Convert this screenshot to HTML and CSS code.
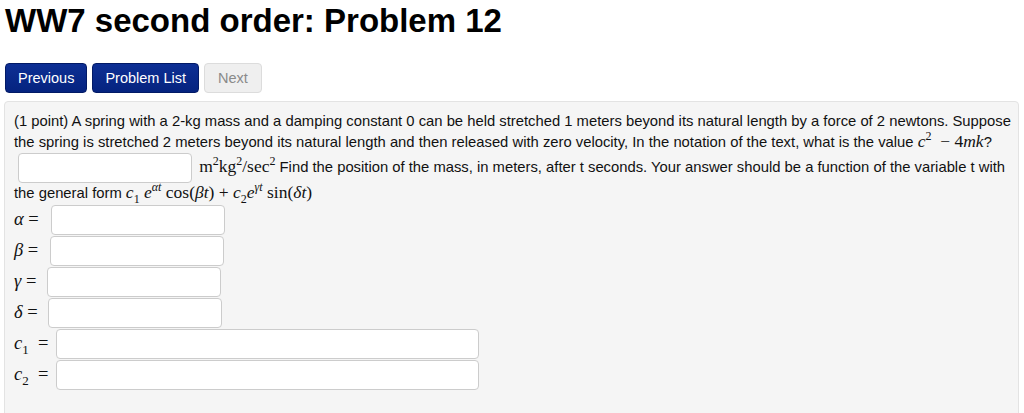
FILE: index.html
```html
<!DOCTYPE html>
<html>
<head>
<meta charset="utf-8">
<link rel="stylesheet" href="styles.css">
</head>
<body>
<h1 class="title">WW7 second order: Problem 12</h1>
<div class="nav">
  <span class="btn btn-primary">Previous</span>
  <span class="btn btn-primary">Problem List</span>
  <span class="btn btn-disabled">Next</span>
</div>
<div class="panel">
  <div class="text">(1 point) A spring with a 2-kg mass and a damping constant 0 can be held stretched 1 meters beyond its natural length by a force of 2 newtons. Suppose<br>the spring is stretched 2 meters beyond its natural length and then released with zero velocity, In the notation of the text, what is the value <span class="math"><i>c</i><sup>2</sup> &nbsp;&minus; 4<i>mk</i></span>?<br><span class="field field-first"></span> <span class="math unit">m<sup>2</sup>kg<sup>2</sup>/sec<sup>2</sup></span> Find the position of the mass, in meters, after t seconds. Your answer should be a function of the variable t with<br>the general form <span class="math"><i>c</i><sub>1</sub> <i>e</i><sup><i>αt</i></sup> cos(<i>βt</i>) + <i>c</i><sub>2</sub><i>e</i><sup><i>γt</i></sup> sin(<i>δt</i>)</span></div>
  <div class="row"><span class="math lbl lbl-a"><i>α</i> =</span><span class="field"></span></div>
  <div class="row"><span class="math lbl lbl-b"><i>β</i> =</span><span class="field"></span></div>
  <div class="row"><span class="math lbl lbl-g"><i>γ</i> =</span><span class="field"></span></div>
  <div class="row"><span class="math lbl lbl-d"><i>δ</i> =</span><span class="field"></span></div>
  <div class="row"><span class="math lbl lbl-c"><i>c</i><sub>1</sub> &nbsp;=</span><span class="field field-wide"></span></div>
  <div class="row"><span class="math lbl lbl-c"><i>c</i><sub>2</sub> &nbsp;=</span><span class="field field-wide"></span></div>
</div>
</body>
</html>
```
FILE: styles.css
```css
html, body {
  margin: 0;
  padding: 0;
  background: #ffffff;
}
body {
  font-family: "Liberation Sans", Arial, sans-serif;
  color: #222222;
  padding: 0 5px 0 4px;
}
.title {
  margin: 0;
  padding: 1px 0 0 1px;
  font-size: 33px;
  line-height: 40px;
  font-weight: bold;
  color: #000000;
}
.nav {
  display: flex;
  gap: 5px;
  margin: 22px 0 0 1px;
}
.btn {
  display: inline-flex;
  align-items: center;
  justify-content: center;
  height: 30px;
  box-sizing: border-box;
  border-radius: 4px;
  font-size: 14.5px;
  padding: 0 12px;
}
.btn-primary {
  background: #0a2c8c;
  background: linear-gradient(#0d2f94, #05237f);
  border: 1px solid #021a66;
  color: #ffffff;
}
.btn-disabled {
  background: #efefef;
  border: 1px solid #dcdcdc;
  color: #8a8a8a;
  padding: 0 13px;
}
.panel {
  margin-top: 8px;
  background: #f5f5f5;
  border: 1px solid #e3e3e3;
  border-radius: 4px;
  padding: 9px 9px 30px 9px;
  font-size: 14.8px;
  line-height: 21px;
  color: #111111;
}
.text {
  margin: 0;
  white-space: nowrap;
}
.math {
  font-family: "Liberation Serif", "Times New Roman", serif;
  font-size: 17.5px;
  line-height: 1;
}
.math sup, .math sub {
  font-size: 12px;
  line-height: 0;
}
.field {
  display: inline-block;
  box-sizing: border-box;
  width: 174px;
  height: 30px;
  background: #ffffff;
  border: 1px solid #cccccc;
  border-radius: 4px;
  vertical-align: middle;
}
.field-first {
  margin-left: 4px;
}
.unit {
  margin-left: 3px;
}
.field-wide {
  width: 423px;
}
.row {
  display: flex;
  align-items: center;
  height: 31px;
}
.lbl {
  white-space: nowrap;
  font-size: 18.5px;
}
.lbl sub {
  font-size: 13px;
}
.lbl-a { width: 37px; }
.lbl-b { width: 36px; }
.lbl-g { width: 33px; }
.lbl-d { width: 34px; }
.lbl-c { width: 42px; }
```
